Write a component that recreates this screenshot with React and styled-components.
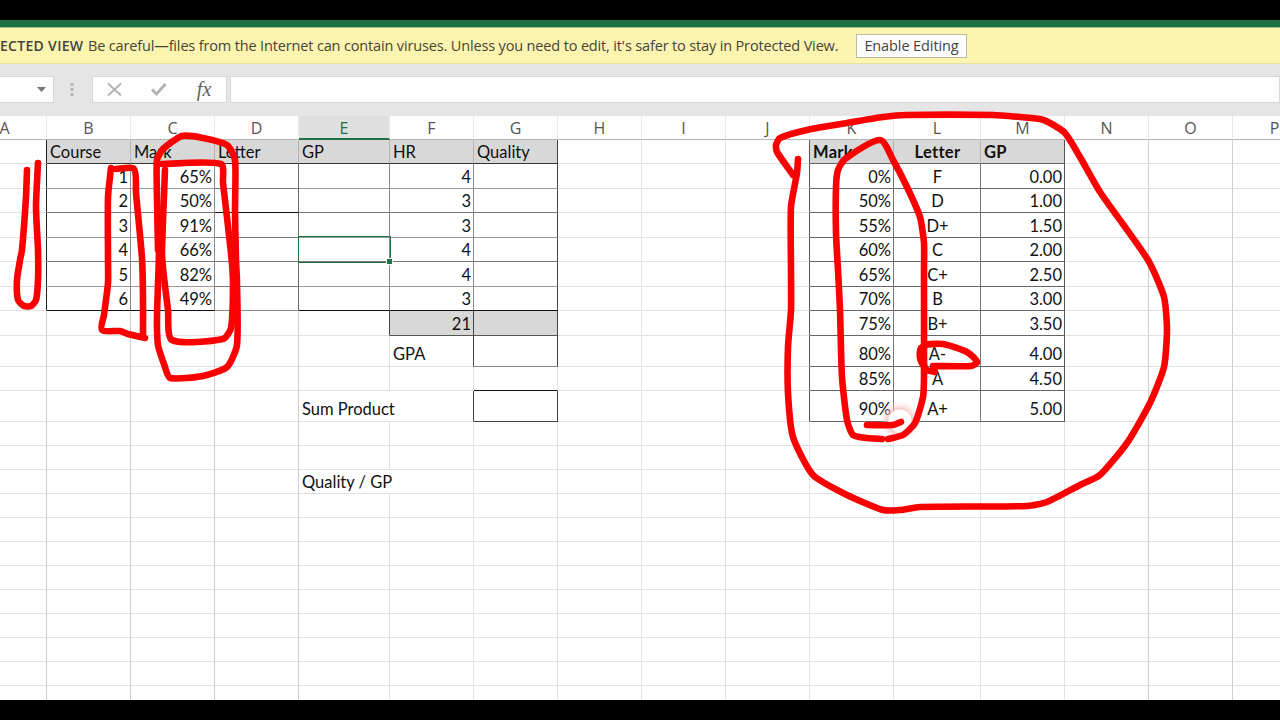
import React from "react";
import styled, { createGlobalStyle, css } from "styled-components";

const Colors = {
  excel: "#1e7145",
  warning: "#fdf4b0",
  chrome: "#e5e5e5",
  grid: "#e1e1e1",
  gridDark: "#cfcfcf",
  fill: "#d8d8d8",
  ink: "#fb0000"
};

const GlobalStyle = createGlobalStyle`
  body {
    margin: 0;
    background: #000;
  }
  * {
    box-sizing: border-box;
  }
`;

const Screen = styled.div`
  position: relative;
  width: 1280px;
  height: 720px;
  padding: 20px 0;
  overflow: hidden;
  display: flex;
  flex-direction: column;
  background: #000;
  font-family: "Open Sans", sans-serif;
`;
const TitleStrip = styled.div`
  flex: 0 0 8px;
  background: ${Colors.excel};
  border-bottom: 1px solid #9dbb83;
`;
const MessageBar = styled.div`
  flex: 0 0 36px;
  display: flex;
  align-items: center;
  background: ${Colors.warning};
  border-bottom: 1px solid #e9dfa4;
  color: #45443a;
  font-size: 14.5px;
  white-space: pre;
`;
const MessageTitle = styled.span`
  width: 88px;
  font-weight: 600;
  font-size: 14px;
  letter-spacing: 0.3px;
`;
const MessageText = styled.span`
  width: 768px;
  letter-spacing: -0.15px;
`;
const EnableButton = styled.button`
  width: 111px;
  height: 24px;
  padding: 0;
  border: 1px solid #bdbba8;
  background: #fdfdfd;
  color: #444;
  font-family: inherit;
  font-size: 14.5px;
  letter-spacing: -0.1px;
`;

const FormulaBar = styled.div`
  flex: 0 0 52px;
  display: flex;
  align-items: flex-start;
  padding-top: 12px;
  background: ${Colors.chrome};
`;
const BarBox = styled.div`
  width: ${props => props.$width}px;
  height: 27px;
  margin-right: ${props => props.$gap || 0}px;
  display: flex;
  align-items: center;
  background: #fdfdfd;
  border: 1px solid #d8d8d8;
  border-left-width: ${props => (props.$open ? 0 : 1)}px;
`;
const NameBox = styled(BarBox)`
  justify-content: flex-end;
  padding-right: 7px;
`;
const Dots = styled.svg`
  width: 38px;
  height: 27px;
`;
const FxLabel = styled.span`
  margin-left: 28px;
  color: #606060;
  font: italic 20px "Liberation Serif", serif;
  line-height: 22px;
  padding-bottom: 2px;
`;

const Sheet = styled.div`
  flex: 0 0 584px;
  width: 1354px;
  margin-left: -37px;
  overflow: hidden;
  background: #fff;
`;
const SheetRow = styled.div`
  display: grid;
  grid-template-columns: repeat(4, 84px) 91px repeat(6, 84px) 87px repeat(4, 84px);
  grid-template-rows: 100%;
  height: ${props => props.$height}px;
`;
const ColumnHeader = styled.div`
  display: flex;
  align-items: flex-start;
  justify-content: center;
  border-right: 1px solid #e9e9e9;
  border-bottom: 1px solid #b5b5b5;
  color: #555;
  font-size: 16px;
  line-height: 25px;
  ${props =>
    props.$selected &&
    css`
      background: #dfdfdf;
      color: ${Colors.excel};
      border-bottom: 2px solid ${Colors.excel};
    `}
`;
const Cell = styled.div`
  position: relative;
  display: flex;
  align-items: flex-end;
  justify-content: ${props => props.$align};
  padding: 0 2px ${props => (props.$tall ? 1 : 0)}px 3px;
  border-right: 1px solid ${props => props.$right};
  border-bottom: 1px solid ${props => props.$bottom};
  background: ${props => (props.$filled ? Colors.fill : "transparent")};
  color: #111;
  font-family: Lato, sans-serif;
  font-size: 16.5px;
  font-weight: ${props => (props.$bold ? 700 : 400)};
  letter-spacing: ${props => (props.$bold ? 0.3 : 0)}px;
  line-height: 21px;
  white-space: nowrap;
`;
const Selection = styled.div`
  position: absolute;
  z-index: 1;
  inset: -2px -2px -2px -1px;
  border: 1.5px solid ${Colors.excel};

  &::after {
    content: "";
    position: absolute;
    right: -2px;
    bottom: -2px;
    width: 5px;
    height: 5px;
    background: ${Colors.excel};
    outline: 1px solid #fff;
  }
`;

const Ink = styled.svg`
  position: absolute;
  z-index: 2;
  top: 0;
  left: 0;
  width: 1280px;
  height: 720px;
  pointer-events: none;
`;

const COLUMNS = "ABCDEFGHIJKLMNOP".split("");
const ROW_HEIGHTS = [24, 25, 24, 25, 24, 25, 24, 25, 31, 24, 31, 24, 24, 24, 24, 24, 24, 24, 24, 24, 24, 24, 24];

const MARKS = [
  ["65%", "4"],
  ["50%", "3"],
  ["91%", "3"],
  ["66%", "4"],
  ["82%", "4"],
  ["49%", "3"]
];
const SCALE = [
  ["0%", "F", "0.00"],
  ["50%", "D", "1.00"],
  ["55%", "D+", "1.50"],
  ["60%", "C", "2.00"],
  ["65%", "C+", "2.50"],
  ["70%", "B", "3.00"],
  ["75%", "B+", "3.50"],
  ["80%", "A-", "4.00"],
  ["85%", "A", "4.50"],
  ["90%", "A+", "5.00"]
];

const values = {
  B1: "Course",
  C1: "Mark",
  D1: "Letter",
  E1: "GP",
  F1: "HR",
  G1: "Quality",
  K1: "Mark",
  L1: "Letter",
  M1: "GP",
  F8: "21",
  F9: "GPA",
  E11: "Sum Product",
  E14: "Quality / GP"
};
MARKS.forEach(([mark, hours], i) => {
  values["B" + (i + 2)] = String(i + 1);
  values["C" + (i + 2)] = mark;
  values["F" + (i + 2)] = hours;
});
SCALE.forEach(([mark, letter, gp], i) => {
  values["K" + (i + 2)] = mark;
  values["L" + (i + 2)] = letter;
  values["M" + (i + 2)] = gp;
});

function between(value, from, to) {
  return value >= from && value <= to;
}

function rightBorder(col, row) {
  if (row <= 7) {
    if (col === "A") return "#222";
    if (col === "G") return "#444";
    if (row > 1 && between(col, "B", "F")) return col === "D" ? "#666" : "#8a8a8a";
    if (row === 1 && between(col, "B", "F")) return "#b4b4b4";
  }
  if (row === 8 && between(col, "E", "G")) return "#444";
  if ((row === 9 || row === 11) && (col === "F" || col === "G")) return "#444";
  if (row <= 11 && (col === "J" || col === "M")) return "#555";
  if (row <= 11 && (col === "K" || col === "L")) return row === 1 ? "#b4b4b4" : "#777";
  if ((row === 11 || row === 14) && col === "E") return "transparent";
  return "ABCDNO".includes(col) ? Colors.gridDark : Colors.grid;
}

function bottomBorder(col, row) {
  if (between(col, "B", "G") && row <= 7) {
    if (row === 1) return "#333";
    if (row === 7) return col === "D" ? "#888" : "#111";
    if (col === "D") return row === 3 ? "#111" : "#777";
    return row === 3 || row === 5 ? "#777" : "#999";
  }
  if (row === 8 && (col === "F" || col === "G")) return "#555";
  if (row === 9 && col === "G") return "#888";
  if (row === 10 && col === "G") return "#111";
  if (row === 11 && col === "G") return "#444";
  if (row <= 11 && between(col, "K", "M")) return "#666";
  return Colors.grid;
}

function alignment(col, row) {
  if (col === "L") return "center";
  if (row === 1) return "flex-start";
  return /[0-9]/.test(values[col + row] || "") ? "flex-end" : "flex-start";
}

function isFilled(col, row) {
  if (row === 1) return between(col, "B", "G") || between(col, "K", "M");
  return row === 8 && (col === "F" || col === "G");
}

function GridRow({ row, height }) {
  return (
    <SheetRow $height={height}>
      {COLUMNS.map(col => (
        <Cell
          key={col}
          $align={alignment(col, row)}
          $right={rightBorder(col, row)}
          $bottom={bottomBorder(col, row)}
          $filled={isFilled(col, row)}
          $bold={row === 1 && between(col, "K", "M")}
          $tall={height === 31}
        >
          {values[col + row]}
          {col === "E" && row === 5 && <Selection />}
        </Cell>
      ))}
    </SheetRow>
  );
}

// pen strokes, as the points the pen went through
const STROKES = [
  [[27,170],[26,197],[22,250],[20,260],[17,280],[18,300],[24,306],[31,306],[36,300],[38,280],[38,250],[36,207],[38,163]],
  [[111,168],[108,197],[108,260],[108,283],[104,315],[102,330],[120,331],[128,334],[145,338]],
  [[116,169],[134,169],[136,193],[142,258],[143,297],[143,335]],
  [[158,250],[157,197],[157,160],[163,149],[182,136],[203,138],[227,145],[235,160],[235,210],[236,260],[237,283],[237,345],[227,367],[203,376],[170,378],[165,367],[158,345],[157,317],[159,250],[157,197]],
  [[162,164],[221,164],[223,183],[231,253],[233,283],[231,328],[223,339],[172,340],[168,310],[163,268],[162,250],[165,170]],
  [[882,439],[867,438],[853,435],[847,420],[842,377],[840,310],[838,270],[836,233],[836,187],[838,170],[845,159],[880,140],[893,160],[907,187],[920,217],[924,243],[924,270],[924,377],[923,397],[915,423],[903,435],[888,439]],
  [[798,159],[797,173],[791,207],[791,270],[791,310],[788,347],[788,393],[793,437],[813,475],[847,495],[883,510],[900,510],[920,507],[1027,506],[1047,502],[1080,485],[1100,475],[1127,443],[1150,403],[1164,367],[1167,330],[1164,297],[1148,260],[1100,192],[1080,157],[1065,133],[1050,123],[1040,119],[1020,117],[993,115],[907,115],[883,117],[847,123],[807,130],[780,138],[776,145],[777,152],[793,175]],
  [[935,372],[927,370],[921,361],[920,351],[925,345],[943,344],[967,352],[977,362],[971,366],[933,366]],
  [[921,348],[920,358],[924,365]],
  [[867,425],[893,425],[901,422]]
];

function toPath(points) {
  let d = `M${points[0].join(" ")}`;
  for (let i = 0; i < points.length - 1; i++) {
    const before = points[i - 1] || points[i];
    const from = points[i];
    const to = points[i + 1];
    const after = points[i + 2] || to;
    // keep the handles shorter than the segment, or short segments overshoot
    const length = Math.hypot(to[0] - from[0], to[1] - from[1]);
    const start = Math.hypot(to[0] - before[0], to[1] - before[1]) || 1;
    const end = Math.hypot(after[0] - from[0], after[1] - from[1]) || 1;
    const a = (length * 0.2) / start;
    const b = (length * 0.2) / end;
    d += ` C${from[0] + (to[0] - before[0]) * a} ${from[1] + (to[1] - before[1]) * a}`;
    d += ` ${to[0] - (after[0] - from[0]) * b} ${to[1] - (after[1] - from[1]) * b}`;
    d += ` ${to[0]} ${to[1]}`;
  }
  return d;
}

function Annotations() {
  return (
    <Ink viewBox="0 0 1280 720">
      <defs>
        <radialGradient id="pointer">
          <stop offset="0" stopColor="#fff" stopOpacity="0.95" />
          <stop offset="0.54" stopColor="#fff" stopOpacity="0.9" />
          <stop offset="0.62" stopColor="#f6b4b4" stopOpacity="0.65" />
          <stop offset="1" stopColor="#ffdede" stopOpacity="0" />
        </radialGradient>
      </defs>
      <circle cx="900" cy="421" r="20" fill="url(#pointer)" />
      <g fill="none" stroke={Colors.ink} strokeWidth="6.6" strokeLinecap="round" strokeLinejoin="round">
        {STROKES.map((points, i) => (
          <path key={i} d={toPath(points)} />
        ))}
      </g>
    </Ink>
  );
}

function App() {
  return (
    <Screen>
      <GlobalStyle />
      <TitleStrip />
      <MessageBar>
        <MessageTitle>ECTED VIEW</MessageTitle>
        <MessageText>
          Be careful—files from the Internet can contain viruses. Unless you need to edit, it's safer to stay in Protected View.
        </MessageText>
        <EnableButton>Enable Editing</EnableButton>
      </MessageBar>
      <FormulaBar>
        <NameBox $width={54} $open>
          <svg width="9" height="5" viewBox="0 0 9 5">
            <path d="M0 0h9L4.500 5z" fill="#777" />
          </svg>
        </NameBox>
        <Dots viewBox="0 0 38 27">
          <path d="M16.500 7h3v3h-3zM16.500 12h3v3h-3zM16.500 17h3v3h-3z" fill="#b5b5b5" />
        </Dots>
        <BarBox $width={135} $gap={3}>
          <svg width="76" height="25" viewBox="0 0 76 25" fill="none" stroke="#b2b2b2">
            <path d="M15 6.500l13 12M28 6.500l-13 12" strokeWidth="1.800" />
            <path d="M59 12.500l4.500 4.500 9-10" strokeWidth="2.800" />
          </svg>
          <FxLabel>fx</FxLabel>
        </BarBox>
        <BarBox $width={1052} />
      </FormulaBar>
      <Sheet>
        <SheetRow $height={24}>
          {COLUMNS.map(col => (
            <ColumnHeader key={col} $selected={col === "E"}>
              {col}
            </ColumnHeader>
          ))}
        </SheetRow>
        {ROW_HEIGHTS.map((height, i) => (
          <GridRow key={i} row={i + 1} height={height} />
        ))}
      </Sheet>
      <Annotations />
    </Screen>
  );
}

export default App;
